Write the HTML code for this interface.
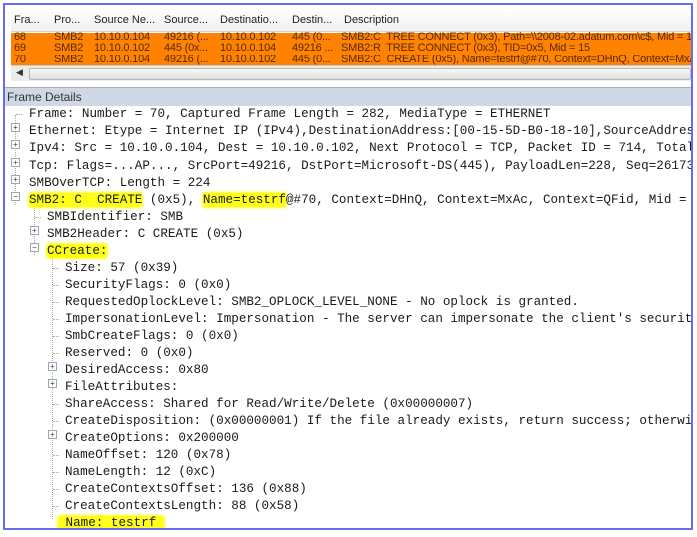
<!DOCTYPE html>
<html><head><style>
body{margin:0;width:697px;height:537px;background:#fff;position:relative;overflow:hidden;font-family:"Liberation Sans",sans-serif}
.frame{position:absolute;left:3px;top:3px;width:686px;height:523px;border:2px solid #6b6bf0;overflow:hidden;background:#fff}
.hdr{position:absolute;left:6px;top:4px;width:680px;height:22px;background:linear-gradient(#fff,#f0f0f0);border-bottom:1px solid #d5d5d5;font-size:11px;color:#222}
.hdr span,.row span{position:absolute;top:5px;white-space:nowrap}
.row{position:absolute;left:6px;width:680px;height:11px;background:#ff8200;font-size:11px;color:#5a2a00;letter-spacing:-0.2px}
.row span{top:-2px}
.sb{position:absolute;left:6px;top:60px;width:680px;height:15px;background:#ececec;border-top:1px solid #ccc}
.sb .th{position:absolute;left:18px;top:2px;width:660px;height:10px;background:linear-gradient(#fafafa,#dcdcdc);border:1px solid #b8b8b8;border-radius:2px}
.fd{position:absolute;left:0;top:82px;width:690px;height:18px;background:#cfd9e5;border-top:1px solid #aaa;font-size:12px;color:#333}
.t{position:absolute;font-family:"Liberation Mono",monospace;font-size:12.6px;color:#1a1a1a;white-space:nowrap;line-height:14px}
.hl{background:#ffff1a;border-radius:3px;box-shadow:0 0 2px 1px #ffff1a}
.ex{position:absolute;width:7px;height:7px;border:1px solid #9aa;background:#fff;font-size:8px;line-height:7px;text-align:center;color:#338;font-family:"Liberation Sans",sans-serif}
.vl{position:absolute;border-left:1px dotted #aaa}
.hd{position:absolute;border-top:1px dotted #aaa;width:6px}
.tree{position:absolute;left:0;top:-5px;width:100%;height:100%}
</style></head><body>
<div class="frame">
<div class="hdr">
<span style="left:3px">Fra...</span><span style="left:43px">Pro...</span><span style="left:83px">Source Ne...</span><span style="left:153px">Source...</span><span style="left:209px">Destinatio...</span><span style="left:281px">Destin...</span><span style="left:333px">Description</span>
</div>
<div class="row" style="top:28px"><span style="left:3px">68</span><span style="left:43px">SMB2</span><span style="left:83px">10.10.0.104</span><span style="left:153px">49216 (...</span><span style="left:209px">10.10.0.102</span><span style="left:281px">445 (0...</span><span style="left:330px">SMB2:C&nbsp; TREE CONNECT (0x3), Path=\\2008-02.adatum.com\c$, Mid = 15</span></div>
<div class="row" style="top:39px"><span style="left:3px">69</span><span style="left:43px">SMB2</span><span style="left:83px">10.10.0.102</span><span style="left:153px">445 (0x...</span><span style="left:209px">10.10.0.104</span><span style="left:281px">49216 ...</span><span style="left:330px">SMB2:R&nbsp; TREE CONNECT (0x3), TID=0x5, Mid = 15</span></div>
<div class="row" style="top:50px;height:10px;overflow:hidden"><span style="left:3px">70</span><span style="left:43px">SMB2</span><span style="left:83px">10.10.0.104</span><span style="left:153px">49216 (...</span><span style="left:209px">10.10.0.102</span><span style="left:281px">445 (0...</span><span style="left:330px">SMB2:C&nbsp; CREATE (0x5), Name=testrf@#70, Context=DHnQ, Context=MxAc, Context=QFid</span></div>
<div style="position:absolute;left:475px;top:60px;width:36px;height:3px;background:#ffff20;border-radius:2px"></div>
<div class="sb"><span style="position:absolute;left:5px;top:1px;font-size:9px;color:#333">&#9664;</span><div class="th"></div></div>
<div class="fd"><span style="position:absolute;left:2px;top:2px">Frame Details</span></div>

<div class="tree">
<div class="vl" style="left:10px;top:115px;height:90px"></div>
<div class="vl" style="left:29px;top:203px;height:52px"></div>
<div class="vl" style="left:47px;top:254px;height:265px"></div>

<div class="hd" style="left:11px;top:114px"></div><div class="t" style="left:24px;top:107px">Frame: Number = 70, Captured Frame Length = 282, MediaType = ETHERNET</div>
<div class="ex" style="left:6px;top:123px">+</div><div class="t" style="left:24px;top:124px">Ethernet: Etype = Internet IP (IPv4),DestinationAddress:[00-15-5D-B0-18-10],SourceAddress</div>
<div class="ex" style="left:6px;top:140px">+</div><div class="t" style="left:24px;top:141px">Ipv4: Src = 10.10.0.104, Dest = 10.10.0.102, Next Protocol = TCP, Packet ID = 714, Total</div>
<div class="ex" style="left:6px;top:158px">+</div><div class="t" style="left:24px;top:159px">Tcp: Flags=...AP..., SrcPort=49216, DstPort=Microsoft-DS(445), PayloadLen=228, Seq=26173</div>
<div class="ex" style="left:6px;top:175px">+</div><div class="t" style="left:24px;top:176px">SMBOverTCP: Length = 224</div>
<div class="ex" style="left:6px;top:192px">&minus;</div><div class="t" style="left:24px;top:193px"><span class="hl">SMB2: C&nbsp; CREATE</span> (0x5), <span class="hl">Name=testrf</span>@#70, Context=DHnQ, Context=MxAc, Context=QFid, Mid =</div>
<div class="hd" style="left:30px;top:217px"></div><div class="t" style="left:42px;top:210px">SMBIdentifier: SMB</div>
<div class="ex" style="left:25px;top:226px">+</div><div class="t" style="left:42px;top:227px">SMB2Header: C CREATE (0x5)</div>
<div class="ex" style="left:25px;top:243px">&minus;</div><div class="t" style="left:42px;top:244px"><span class="hl">CCreate:</span></div>
<div class="hd" style="left:48px;top:268px"></div><div class="t" style="left:60px;top:261px">Size: 57 (0x39)</div>
<div class="hd" style="left:48px;top:285px"></div><div class="t" style="left:60px;top:278px">SecurityFlags: 0 (0x0)</div>
<div class="hd" style="left:48px;top:302px"></div><div class="t" style="left:60px;top:295px">RequestedOplockLevel: SMB2_OPLOCK_LEVEL_NONE - No oplock is granted.</div>
<div class="hd" style="left:48px;top:319px"></div><div class="t" style="left:60px;top:312px">ImpersonationLevel: Impersonation - The server can impersonate the client's security</div>
<div class="hd" style="left:48px;top:336px"></div><div class="t" style="left:60px;top:329px">SmbCreateFlags: 0 (0x0)</div>
<div class="hd" style="left:48px;top:353px"></div><div class="t" style="left:60px;top:346px">Reserved: 0 (0x0)</div>
<div class="ex" style="left:43px;top:362px">+</div><div class="t" style="left:60px;top:363px">DesiredAccess: 0x80</div>
<div class="ex" style="left:43px;top:379px">+</div><div class="t" style="left:60px;top:380px">FileAttributes:</div>
<div class="hd" style="left:48px;top:404px"></div><div class="t" style="left:60px;top:397px">ShareAccess: Shared for Read/Write/Delete (0x00000007)</div>
<div class="hd" style="left:48px;top:421px"></div><div class="t" style="left:60px;top:414px">CreateDisposition: (0x00000001) If the file already exists, return success; otherwis</div>
<div class="ex" style="left:43px;top:430px">+</div><div class="t" style="left:60px;top:431px">CreateOptions: 0x200000</div>
<div class="hd" style="left:48px;top:455px"></div><div class="t" style="left:60px;top:448px">NameOffset: 120 (0x78)</div>
<div class="hd" style="left:48px;top:472px"></div><div class="t" style="left:60px;top:465px">NameLength: 12 (0xC)</div>
<div class="hd" style="left:48px;top:489px"></div><div class="t" style="left:60px;top:482px">CreateContextsOffset: 136 (0x88)</div>
<div class="hd" style="left:48px;top:506px"></div><div class="t" style="left:60px;top:499px">CreateContextsLength: 88 (0x58)</div>
<div class="t" style="left:53px;top:516px"><span class="hl">&nbsp;Name: testrf&nbsp;</span></div>
</div>
</div>
</body></html>
